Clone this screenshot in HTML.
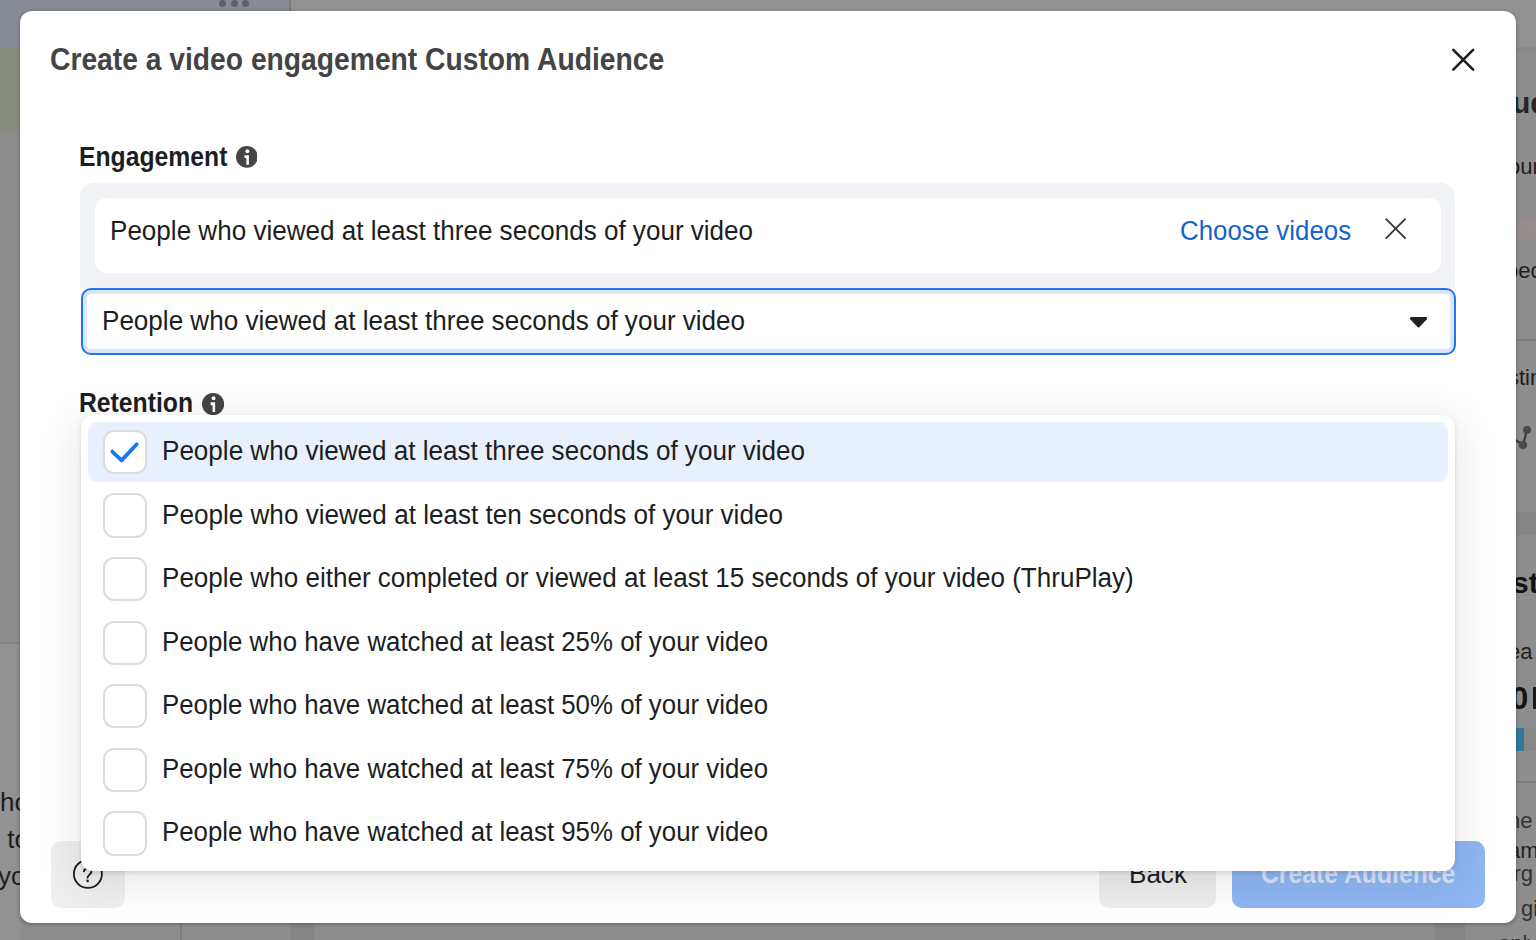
<!DOCTYPE html>
<html><head><meta charset="utf-8">
<style>
*{box-sizing:border-box;margin:0;padding:0}
html,body{width:1536px;height:940px;overflow:hidden}
body{position:relative;background:#8d8d8d;font-family:"Liberation Sans",sans-serif;color:#1c1e21}
.abs{position:absolute}
.t{position:absolute;white-space:nowrap;line-height:1;transform-origin:0 0}
</style></head><body>
<div class="abs" style="left:0px;top:0px;width:290.00px;height:47.00px;background:#878b95"></div>
<div class="abs" style="left:290px;top:0px;width:1246.00px;height:47.00px;background:#929292"></div>
<div class="abs" style="left:1516px;top:47px;width:20.00px;height:6.00px;background:#8a8a8a"></div>
<div class="abs" style="left:0px;top:642px;width:20.00px;height:1.50px;background:#858585"></div>
<div class="abs" style="left:289px;top:0px;width:2.00px;height:47.00px;background:#7d7d7d"></div>
<div class="abs" style="left:0px;top:47px;width:20.00px;height:84.00px;background:#898d80"></div>
<div class="abs" style="left:218.5px;top:0px;width:7px;height:7px;border-radius:50%;background:#5d6068"></div>
<div class="abs" style="left:230.5px;top:0px;width:7px;height:7px;border-radius:50%;background:#5d6068"></div>
<div class="abs" style="left:241.5px;top:0px;width:7px;height:7px;border-radius:50%;background:#5d6068"></div>
<div class="abs" style="left:180px;top:923px;width:2.00px;height:17.00px;background:#7f7f7f"></div>
<div class="abs" style="left:290px;top:923px;width:24.00px;height:17.00px;background:#858585"></div>
<div class="abs" style="left:1435px;top:923px;width:30.00px;height:17.00px;background:#858585"></div>
<div class="abs" style="left:1516px;top:53px;width:20.00px;height:887.00px;background:#8e8e8e"></div>
<div class="t" style="left:1512.00px;top:87.60px;font-size:30px;font-weight:700;color:#252525;">ud</div>
<div class="t" style="left:1508.00px;top:156.37px;font-size:22px;font-weight:400;color:#202020;">our</div>
<div class="abs" style="left:1516px;top:220px;width:20.00px;height:18.00px;background:#968d8d"></div>
<div class="t" style="left:1506.00px;top:260.37px;font-size:22px;font-weight:400;color:#202020;">pec</div>
<div class="abs" style="left:1516px;top:339px;width:20.00px;height:2.00px;background:#7f7f7f"></div>
<div class="t" style="left:1508.00px;top:367.37px;font-size:22px;font-weight:400;color:#202020;">stin</div>
<svg class="abs" style="left:1510px;top:420px" width="26" height="34"><path d="M17 10L13 25L4 19" stroke="#3a3a3a" stroke-width="2.2" fill="none"/><circle cx="17" cy="10" r="4" fill="#4a4a4a"/><circle cx="13" cy="25" r="4.2" fill="#4a4a4a"/></svg>
<div class="abs" style="left:1516px;top:512px;width:20.00px;height:23.00px;background:#868686"></div>
<div class="t" style="left:1512.00px;top:567.60px;font-size:30px;font-weight:700;color:#141414;">st</div>
<div class="t" style="left:1508.00px;top:641.37px;font-size:22px;font-weight:400;color:#202020;">ea</div>
<div class="t" style="left:1511.00px;top:682.75px;font-size:31px;font-weight:700;color:#141414;">0</div>
<div class="abs" style="left:1516px;top:728px;width:8.00px;height:23.00px;background:#2e7d98"></div>
<div class="abs" style="left:1524px;top:728px;width:12.00px;height:23.00px;background:#888888"></div>
<div class="abs" style="left:1532.5px;top:687px;width:3.50px;height:22.00px;background:#1a1a1a"></div>
<div class="abs" style="left:1516px;top:781px;width:20.00px;height:1.50px;background:#808080"></div>
<div class="t" style="left:1508.00px;top:810.37px;font-size:22px;font-weight:400;color:#333;">he</div>
<div class="t" style="left:1508.00px;top:839.87px;font-size:22px;font-weight:400;color:#222;">am</div>
<div class="t" style="left:1513.50px;top:863.37px;font-size:22px;font-weight:400;color:#333;">rg</div>
<div class="t" style="left:1521.00px;top:898.37px;font-size:22px;font-weight:400;color:#333;">gi</div>
<div class="t" style="left:1498.00px;top:933.37px;font-size:22px;font-weight:400;color:#333;">only</div>
<div class="abs" style="left:0px;top:643.5px;width:20.00px;height:296.50px;background:#929292"></div>
<div class="t" style="left:0.00px;top:789.29px;font-size:26px;font-weight:400;color:#1e1e1e;">ho</div>
<div class="t" style="left:7.30px;top:826.29px;font-size:26px;font-weight:400;color:#1e1e1e;">to</div>
<div class="t" style="left:-2.00px;top:863.39px;font-size:26px;font-weight:400;color:#1e1e1e;">yo</div>
<div class="abs" style="left:20px;top:11px;width:1496.00px;height:912.30px;background:#fff;border-radius:12px;box-shadow:0 1px 4px rgba(0,0,0,0.3)"></div>
<div class="t" style="left:49.80px;top:44.05px;font-size:31px;font-weight:700;color:#444;transform:scaleX(0.911);">Create a video engagement Custom Audience</div>
<svg class="abs" style="left:1450px;top:47px" width="26" height="26" viewBox="0 0 26 26"><path d="M3.3 2.8L23.1 22.6M23.1 2.8L3.3 22.6" stroke="#1c1c1c" stroke-width="2.6" stroke-linecap="round"/></svg>
<div class="t" style="left:79.40px;top:143.54px;font-size:27px;font-weight:700;color:#1c1e21;transform:scaleX(0.916);">Engagement</div>
<svg class="abs" style="left:235.60px;top:146.00px" width="21.8" height="21.8" viewBox="0 0 24 24"><circle cx="12" cy="12" r="12" fill="#444"/><circle cx="12.5" cy="5.8" r="2.15" fill="#fff"/><path d="M9.3 10.1H14.2V20.6H11.4V13.3H9.3Z" fill="#fff"/></svg>
<div class="abs" style="left:80.2px;top:182.8px;width:1375.10px;height:105.20px;background:#f0f2f5;border-radius:14px 14px 0 0"></div>
<div class="abs" style="left:95px;top:197.5px;width:1346.00px;height:75.00px;background:#fff;border-radius:12px"></div>
<div class="t" style="left:109.60px;top:217.94px;font-size:27px;font-weight:400;color:#1c1e21;transform:scaleX(0.965);">People who viewed at least three seconds of your video</div>
<div class="t" style="left:1179.50px;top:217.94px;font-size:27px;font-weight:400;color:#1662cc;transform:scaleX(0.958245);">Choose videos</div>
<svg class="abs" style="left:1383px;top:215.5px" width="25" height="25" viewBox="0 0 25 25"><path d="M2.7 2.7L22.6 22.6M22.6 2.7L2.7 22.6" stroke="#333" stroke-width="1.75" stroke-linecap="butt"/></svg>
<div class="abs" style="left:81px;top:288px;width:1374.50px;height:67.00px;background:#fff;border:2px solid #1f74f0;box-shadow:inset 0 0 0 4px #d8e5fb;border-radius:10px"></div>
<div class="t" style="left:102.20px;top:307.54px;font-size:27px;font-weight:400;color:#1c1e21;transform:scaleX(0.965);">People who viewed at least three seconds of your video</div>
<svg class="abs" style="left:1408px;top:315px" width="21" height="14" viewBox="0 0 21 14"><path d="M3.2 3.4h14.6l-7.3 7.6z" fill="#222" stroke="#222" stroke-width="2.8" stroke-linejoin="round"/></svg>
<div class="t" style="left:79.20px;top:389.74px;font-size:27px;font-weight:700;color:#1c1e21;transform:scaleX(0.916);">Retention</div>
<svg class="abs" style="left:201.90px;top:392.50px" width="22.2" height="22.2" viewBox="0 0 24 24"><circle cx="12" cy="12" r="12" fill="#444"/><circle cx="12.5" cy="5.8" r="2.15" fill="#fff"/><path d="M9.3 10.1H14.2V20.6H11.4V13.3H9.3Z" fill="#fff"/></svg>
<div class="abs" style="left:50.9px;top:841px;width:74.00px;height:67.00px;background:#efefef;border-radius:10px"></div>
<svg class="abs" style="left:71px;top:858px" width="34" height="34" viewBox="0 0 34 34"><circle cx="16.9" cy="15.9" r="14" fill="none" stroke="#1c1c1c" stroke-width="1.8"/><path d="M12.9 13.4C13.4 11.3 15 10.3 16.8 10.4C19.3 10.6 21 12.4 20.2 14.6C19.6 16.2 17 17 16.5 19.6" fill="none" stroke="#1c1c1c" stroke-width="1.9" stroke-linecap="round"/><circle cx="16.6" cy="22.9" r="1.3" fill="#1c1c1c"/></svg>
<div class="abs" style="left:1098.6px;top:841px;width:117.50px;height:67.00px;background:#ededed;border-radius:10px"></div>
<div class="t" style="left:1129.20px;top:861.14px;font-size:27px;font-weight:400;color:#1c1e21;transform:scaleX(0.965);">Back</div>
<div class="abs" style="left:1231.6px;top:841px;width:253.40px;height:67.00px;background:#8fb6f3;border-radius:10px"></div>
<div class="t" style="left:1261.00px;top:861.14px;font-size:27px;font-weight:700;color:#d8e4f8;transform:scaleX(0.916);">Create Audience</div>
<div class="abs" style="left:80.6px;top:414.7px;width:1374.40px;height:456.30px;background:#fff;border-radius:12px;box-shadow:0 2px 4px rgba(0,0,0,0.13),0 8px 40px 6px rgba(0,0,0,0.085)"></div>
<div class="abs" style="left:87.8px;top:422.3px;width:1360.00px;height:59.60px;background:#e8f0fd;border-radius:10px"></div>
<div class="abs" style="left:102.9px;top:429.9px;width:44.40px;height:44.40px;background:#fff;border:2px solid #dcdcdc;border-radius:11px"></div>
<div class="t" style="left:162.30px;top:438.34px;font-size:27px;font-weight:400;color:#1c1e21;transform:scaleX(0.965);">People who viewed at least three seconds of your video</div>
<div class="abs" style="left:102.9px;top:493.45px;width:44.40px;height:44.40px;background:#fff;border:2px solid #dcdcdc;border-radius:11px"></div>
<div class="t" style="left:162.30px;top:501.84px;font-size:27px;font-weight:400;color:#1c1e21;transform:scaleX(0.9666405);">People who viewed at least ten seconds of your video</div>
<div class="abs" style="left:102.9px;top:557.0px;width:44.40px;height:44.40px;background:#fff;border:2px solid #dcdcdc;border-radius:11px"></div>
<div class="t" style="left:162.30px;top:565.34px;font-size:27px;font-weight:400;color:#1c1e21;transform:scaleX(0.965);">People who either completed or viewed at least 15 seconds of your video (ThruPlay)</div>
<div class="abs" style="left:102.9px;top:620.55px;width:44.40px;height:44.40px;background:#fff;border:2px solid #dcdcdc;border-radius:11px"></div>
<div class="t" style="left:162.30px;top:628.84px;font-size:27px;font-weight:400;color:#1c1e21;transform:scaleX(0.9567975);">People who have watched at least 25% of your video</div>
<div class="abs" style="left:102.9px;top:684.0999999999999px;width:44.40px;height:44.40px;background:#fff;border:2px solid #dcdcdc;border-radius:11px"></div>
<div class="t" style="left:162.30px;top:692.34px;font-size:27px;font-weight:400;color:#1c1e21;transform:scaleX(0.9567975);">People who have watched at least 50% of your video</div>
<div class="abs" style="left:102.9px;top:747.65px;width:44.40px;height:44.40px;background:#fff;border:2px solid #dcdcdc;border-radius:11px"></div>
<div class="t" style="left:162.30px;top:755.84px;font-size:27px;font-weight:400;color:#1c1e21;transform:scaleX(0.9567975);">People who have watched at least 75% of your video</div>
<div class="abs" style="left:102.9px;top:811.1999999999999px;width:44.40px;height:44.40px;background:#fff;border:2px solid #dcdcdc;border-radius:11px"></div>
<div class="t" style="left:162.30px;top:819.34px;font-size:27px;font-weight:400;color:#1c1e21;transform:scaleX(0.9567975);">People who have watched at least 95% of your video</div>
<svg class="abs" style="left:103.1px;top:430.1px" width="44" height="44" viewBox="0 0 44 44"><path d="M9.3 21.6L18.6 30.4L33.7 14.3" fill="none" stroke="#1877f2" stroke-width="3.8" stroke-linecap="round" stroke-linejoin="round"/></svg>
</body></html>
